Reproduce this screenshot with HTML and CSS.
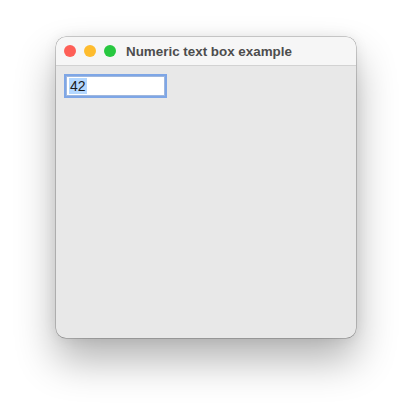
FILE: index.html
```html
<!DOCTYPE html>
<html>
<head>
<meta charset="utf-8">
<link rel="stylesheet" href="styles.css">
</head>
<body>
<div class="window">
  <div class="titlebar">
    <div class="lights">
      <span class="light red"></span>
      <span class="light yellow"></span>
      <span class="light green"></span>
    </div>
    <div class="title">Numeric text box example</div>
  </div>
  <div class="content">
    <div class="field"><span class="sel">42</span></div>
  </div>
</div>
</body>
</html>
```
FILE: styles.css
```css
html, body {
  margin: 0;
  padding: 0;
  background: #ffffff;
}
body {
  width: 412px;
  height: 412px;
  padding: 37px 0 0 56px;
  box-sizing: border-box;
  font-family: "Liberation Sans", Arial, sans-serif;
}
.window {
  width: 300px;
  height: 301px;
  border-radius: 10px;
  background: #e8e8e8;
  box-shadow: 0 0 0 0.5px rgba(0,0,0,0.35), 0 22px 40px rgba(0,0,0,0.30), 0 0 14px rgba(0,0,0,0.08);
  display: flex;
  flex-direction: column;
  overflow: hidden;
}
.titlebar {
  height: 28px;
  background: #f6f6f6;
  border-bottom: 1px solid #d2d2d2;
  display: flex;
  align-items: center;
  padding-left: 8px;
  flex-shrink: 0;
}
.lights {
  display: flex;
  gap: 8px;
}
.light {
  width: 12px;
  height: 12px;
  border-radius: 50%;
  display: block;
}
.red { background: #fe5f57; }
.yellow { background: #febc2e; }
.green { background: #28c840; }
.title {
  margin-left: 10px;
  font-size: 13.4px;
  font-weight: bold;
  color: #4d4d4d;
}
.content {
  padding: 8px;
}
.field {
  width: 95px;
  height: 18px;
  background: #ffffff;
  border: 1px solid #9fb7de;
  box-shadow: 0 0 0 2px #7ea6e6;
  margin: 2px;
  font-size: 14px;
  line-height: 18px;
  padding-left: 2px;
  color: #1a1a1a;
}
.sel {
  background: #b3d7ff;
  display: inline-block;
  height: 16px;
  line-height: 16px;
  margin-top: 1px;
  padding: 0 1px;
}
```
